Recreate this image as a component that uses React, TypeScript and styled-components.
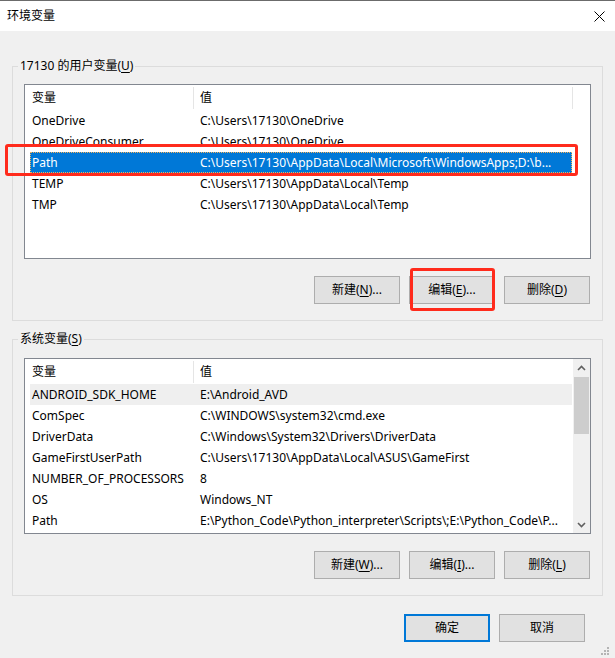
import React from "react";
import styled, { createGlobalStyle, css } from "styled-components";

const GlobalStyle = createGlobalStyle`
  html, body { margin: 0; padding: 0; background: #f0f0f0; }
  body {
    font-family: "Noto Sans", "Noto Sans CJK SC", sans-serif;
    font-size: 12px;
    color: #000;
  }
`;

const Window = styled.div`
  position: relative;
  width: 615px;
  height: 658px;
  background: #f0f0f0;
  display: flex;
  flex-direction: column;
  overflow: hidden;
`;

const TitleBar = styled.div`
  height: 31px;
  box-sizing: border-box;
  flex-shrink: 0;
  border-top: 1px solid #6b6b6b;
  background: #fff;
  display: flex;
  align-items: center;
  justify-content: space-between;
  padding: 0 10px 0 7px;
`;

const Title = styled.span`
  font-size: 12px;
  line-height: 16px;
`;

const Group = styled.fieldset<{ $top: number; $bottom: number; $ptop: number }>`
  margin: ${(p) => p.$top}px 0 0 12px;
  width: 591px;
  box-sizing: border-box;
  border: 1px solid #dcdcdc;
  padding: ${(p) => p.$ptop}px 11px ${(p) => p.$bottom}px 11px;
  min-width: 0;
`;

const Legend = styled.legend`
  padding: 0 2px;
  margin-left: -6px;
  font-size: 12px;
  line-height: 16px;
`;

const Key = styled.u`
  text-decoration: underline;
  text-underline-offset: 2px;
`;

const ListBox = styled.div<{ $h: number }>`
  height: ${(p) => p.$h}px;
  box-sizing: border-box;
  border: 1px solid #828790;
  background: #fff;
  display: flex;
  overflow: hidden;
`;

const ListMain = styled.div`
  flex: 1;
  min-width: 0;
  display: flex;
  flex-direction: column;
  overflow: hidden;
`;

const HeaderRow = styled.div`
  display: flex;
  height: 25px;
  flex-shrink: 0;
`;

const HeaderCell = styled.div<{ $w: number; $pl: number }>`
  width: ${(p) => p.$w}px;
  box-sizing: border-box;
  padding-left: ${(p) => p.$pl}px;
  display: flex;
  align-items: center;
  line-height: 16px;
`;

const HeaderDivider = styled.div`
  width: 1px;
  height: 22px;
  margin-top: 2px;
  background: #e5e5e5;
`;

const Row = styled.div<{ $state?: "selected" | "hover" }>`
  margin-left: 5px;
  width: 542px;
  height: 21px;
  flex-shrink: 0;
  display: flex;
  align-items: center;
  box-sizing: border-box;
  line-height: 16px;
  ${(p) =>
    p.$state === "selected" &&
    css`
      background: #0078d7;
      color: #fff;
      outline: 1px dotted #f5b25a;
      outline-offset: -1px;
    `}
  ${(p) =>
    p.$state === "hover" &&
    css`
      background: #efefef;
    `}
`;

const NameCell = styled.div`
  width: 163px;
  box-sizing: border-box;
  padding-left: 2px;
  white-space: nowrap;
  overflow: hidden;
`;

const ValueCell = styled.div`
  flex: 1;
  min-width: 0;
  padding-left: 7px;
  white-space: nowrap;
  overflow: hidden;
`;

const ScrollBar = styled.div`
  width: 17px;
  flex-shrink: 0;
  background: #f0f0f0;
  display: flex;
  flex-direction: column;
`;

const ScrollArrow = styled.div`
  height: 17px;
  flex-shrink: 0;
  display: flex;
  align-items: center;
  justify-content: center;
`;

const ScrollTrack = styled.div`
  flex: 1;
  padding-top: 1px;
`;

const ScrollThumb = styled.div`
  margin: 0 1px;
  height: 57px;
  background: #cdcdcd;
`;

const ButtonRow = styled.div<{ $mt: number; $pr: number }>`
  display: flex;
  justify-content: flex-end;
  gap: 9px;
  margin-top: ${(p) => p.$mt}px;
  padding-right: ${(p) => p.$pr}px;
`;

const Btn = styled.button<{ $default?: boolean }>`
  width: 86px;
  height: 28px;
  box-sizing: border-box;
  background: #e1e1e1;
  border: 1px solid #adadad;
  font-family: inherit;
  font-size: 12px;
  line-height: 16px;
  color: #000;
  padding: 0;
  ${(p) =>
    p.$default &&
    css`
      border: 2px solid #0078d7;
    `}
`;

const Footer = styled(ButtonRow)``;

const Annotation = styled.div`
  position: absolute;
  box-sizing: border-box;
  border: 3px solid #ff2b1c;
  border-radius: 3px;
  pointer-events: none;
`;

const Grip = styled.svg`
  position: absolute;
  right: 6px;
  bottom: 3px;
`;

const Chevron = ({ up }: { up?: boolean }) => (
  <svg width="9" height="6" viewBox="0 0 9 6">
    <path
      d={up ? "M1 5 L4.5 1.5 L8 5" : "M1 1 L4.5 4.5 L8 1"}
      fill="none"
      stroke="#606060"
      strokeWidth="1.6"
    />
  </svg>
);

type Item = { name: string; value: string; state?: "selected" | "hover" };

const userVars: Item[] = [
  { name: "OneDrive", value: "C:\\Users\\17130\\OneDrive" },
  { name: "OneDriveConsumer", value: "C:\\Users\\17130\\OneDrive" },
  {
    name: "Path",
    value: "C:\\Users\\17130\\AppData\\Local\\Microsoft\\WindowsApps;D:\\b...",
    state: "selected",
  },
  { name: "TEMP", value: "C:\\Users\\17130\\AppData\\Local\\Temp" },
  { name: "TMP", value: "C:\\Users\\17130\\AppData\\Local\\Temp" },
];

const sysVars: Item[] = [
  { name: "ANDROID_SDK_HOME", value: "E:\\Android_AVD", state: "hover" },
  { name: "ComSpec", value: "C:\\WINDOWS\\system32\\cmd.exe" },
  { name: "DriverData", value: "C:\\Windows\\System32\\Drivers\\DriverData" },
  { name: "GameFirstUserPath", value: "C:\\Users\\17130\\AppData\\Local\\ASUS\\GameFirst" },
  { name: "NUMBER_OF_PROCESSORS", value: "8" },
  { name: "OS", value: "Windows_NT" },
  {
    name: "Path",
    value: "E:\\Python_Code\\Python_interpreter\\Scripts\\;E:\\Python_Code\\P...",
  },
];

const VarList = ({ items, height, scroll }: { items: Item[]; height: number; scroll?: boolean }) => (
  <ListBox $h={height}>
    <ListMain>
      <HeaderRow>
        <HeaderCell $w={168} $pl={7}>变量</HeaderCell>
        <HeaderDivider />
        <HeaderCell $w={378} $pl={6}>值</HeaderCell>
        {!scroll && <HeaderDivider />}
      </HeaderRow>
      {items.map((it, i) => (
        <Row key={i} $state={it.state}>
          <NameCell>{it.name}</NameCell>
          <ValueCell>{it.value}</ValueCell>
        </Row>
      ))}
    </ListMain>
    {scroll && (
      <ScrollBar>
        <ScrollArrow>
          <Chevron up />
        </ScrollArrow>
        <ScrollTrack>
          <ScrollThumb />
        </ScrollTrack>
        <ScrollArrow>
          <Chevron />
        </ScrollArrow>
      </ScrollBar>
    )}
  </ListBox>
);

export default function App() {
  return (
    <>
      <GlobalStyle />
      <Window>
        <TitleBar>
          <Title>环境变量</Title>
          <svg width="11" height="11" viewBox="0 0 11 11">
            <path d="M0.5 0.5 L10.5 10.5 M10.5 0.5 L0.5 10.5" stroke="#000" strokeWidth="1" />
          </svg>
        </TitleBar>

        <Group $top={27} $ptop={10} $bottom={16}>
          <Legend>
            17130 的用户变量(<Key>U</Key>)
          </Legend>
          <VarList items={userVars} height={175} />
          <ButtonRow $mt={17} $pr={1}>
            <Btn>
              新建(<Key>N</Key>)...
            </Btn>
            <Btn>
              编辑(<Key>E</Key>)...
            </Btn>
            <Btn>
              删除(<Key>D</Key>)
            </Btn>
          </ButtonRow>
        </Group>

        <Group $top={10} $ptop={11} $bottom={16}>
          <Legend>
            系统变量(<Key>S</Key>)
          </Legend>
          <VarList items={sysVars} height={176} scroll />
          <ButtonRow $mt={17} $pr={1}>
            <Btn>
              新建(<Key>W</Key>)...
            </Btn>
            <Btn>
              编辑(<Key>I</Key>)...
            </Btn>
            <Btn>
              删除(<Key>L</Key>)
            </Btn>
          </ButtonRow>
        </Group>

        <Footer $mt={18} $pr={30}>
          <Btn $default>确定</Btn>
          <Btn>取消</Btn>
        </Footer>

        <Annotation style={{ left: 5, top: 144, width: 573, height: 32 }} />
        <Annotation style={{ left: 410, top: 268, width: 85, height: 43 }} />

        <Grip width="8" height="8" viewBox="0 0 8 8">
          <rect x="6" y="0" width="2" height="2" fill="#b4b4b4" />
          <rect x="3" y="3" width="2" height="2" fill="#b4b4b4" />
          <rect x="6" y="3" width="2" height="2" fill="#b4b4b4" />
          <rect x="0" y="6" width="2" height="2" fill="#b4b4b4" />
          <rect x="3" y="6" width="2" height="2" fill="#b4b4b4" />
          <rect x="6" y="6" width="2" height="2" fill="#b4b4b4" />
        </Grip>
      </Window>
    </>
  );
}
